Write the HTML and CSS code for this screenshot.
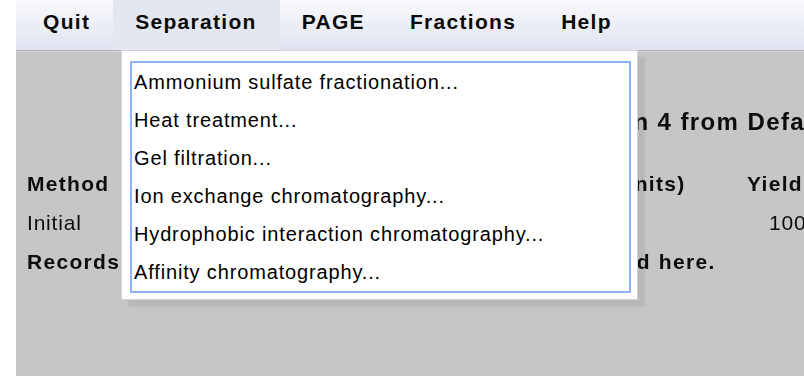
FILE: index.html
```html
<!DOCTYPE html>
<html>
<head>
<meta charset="utf-8">
<link rel="stylesheet" href="styles.css">
</head>
<body>
<div class="app">
  <nav class="menubar">
    <div class="menu-item">Quit</div>
    <div class="menu-item active">Separation</div>
    <div class="menu-item">PAGE</div>
    <div class="menu-item">Fractions</div>
    <div class="menu-item">Help</div>
  </nav>
  <main class="content">
    <h1 class="title">Purification of protein 4 from Default Mixture</h1>
    <div class="table">
      <div class="th">Method</div>
      <div class="th">Protein (mg)</div>
      <div class="th">Enzyme (units)</div>
      <div class="th">Yield (%)</div>
      <div class="td">Initial</div>
      <div class="td">250.0</div>
      <div class="td">1000.0</div>
      <div class="td num">100</div>
    </div>
    <p class="records">Records of all your purification steps will be displayed here.</p>
  </main>
  <div class="dropdown">
    <ul class="dropdown-list">
      <li>Ammonium sulfate fractionation...</li>
      <li>Heat treatment...</li>
      <li>Gel filtration...</li>
      <li>Ion exchange chromatography...</li>
      <li>Hydrophobic interaction chromatography...</li>
      <li>Affinity chromatography...</li>
    </ul>
  </div>
</div>
</body>
</html>
```

FILE: styles.css
```css
html, body {
  margin: 0;
  padding: 0;
  background: #ffffff;
}
body {
  padding-left: 16px;
  width: 788px;
  height: 376px;
  overflow: hidden;
  font-family: "Liberation Sans", Arial, sans-serif;
  color: #0c0c0c;
}
.app {
  position: relative;
  height: 376px;
  background: #c6c6c6;
  overflow: hidden;
}
.menubar {
  display: flex;
  box-sizing: border-box;
  height: 51px;
  padding-left: 5px;
  background: linear-gradient(#f8f9fc, #e0e4ef);
  border-bottom: 1px solid #b2b2b2;
  box-shadow: 0 1px 0 #d9d9d9;
}
.menu-item {
  padding: 0 23px 0 22px;
  line-height: 44px;
  font-size: 21px;
  font-weight: bold;
  letter-spacing: 1.3px;
  color: #0a0a0a;
}
.menu-item.active {
  background: #e3e7f0;
}
.content {
  padding: 0 11px;
  filter: blur(0.45px);
  white-space: nowrap;
}
.title {
  margin: 56px 0 0 0;
  padding-left: 341px;
  font-size: 24px;
  line-height: 30px;
  letter-spacing: 1.4px;
  font-weight: bold;
}
.table {
  display: grid;
  grid-template-columns: 200px 291px 229px auto;
  margin-top: 27px;
}
.th, .td {
  font-size: 21px;
  line-height: 39px;
}
.th {
  font-weight: bold;
  letter-spacing: 1.3px;
}
.td {
  letter-spacing: 0.8px;
}
.num {
  padding-left: 22px;
}
.records {
  margin: 0;
  font-size: 21px;
  line-height: 40px;
  font-weight: bold;
  letter-spacing: 1.3px;
  word-spacing: 0.9px;
}
.dropdown {
  position: absolute;
  left: 105px;
  top: 50px;
  width: 517px;
  height: 250px;
  box-sizing: border-box;
  background: #ffffff;
  border: 1px solid #d3d3d3;
  box-shadow: 7px 7px 2px rgba(0, 0, 0, 0.07);
  padding: 10px 6px 6px 8px;
}
.dropdown-list {
  list-style: none;
  margin: 0;
  padding: 0 0 0 2px;
  border: 2px solid #8fb3f7;
}
.dropdown-list li {
  font-size: 20px;
  line-height: 38px;
  letter-spacing: 0.85px;
  color: #000;
  white-space: nowrap;
}
```
